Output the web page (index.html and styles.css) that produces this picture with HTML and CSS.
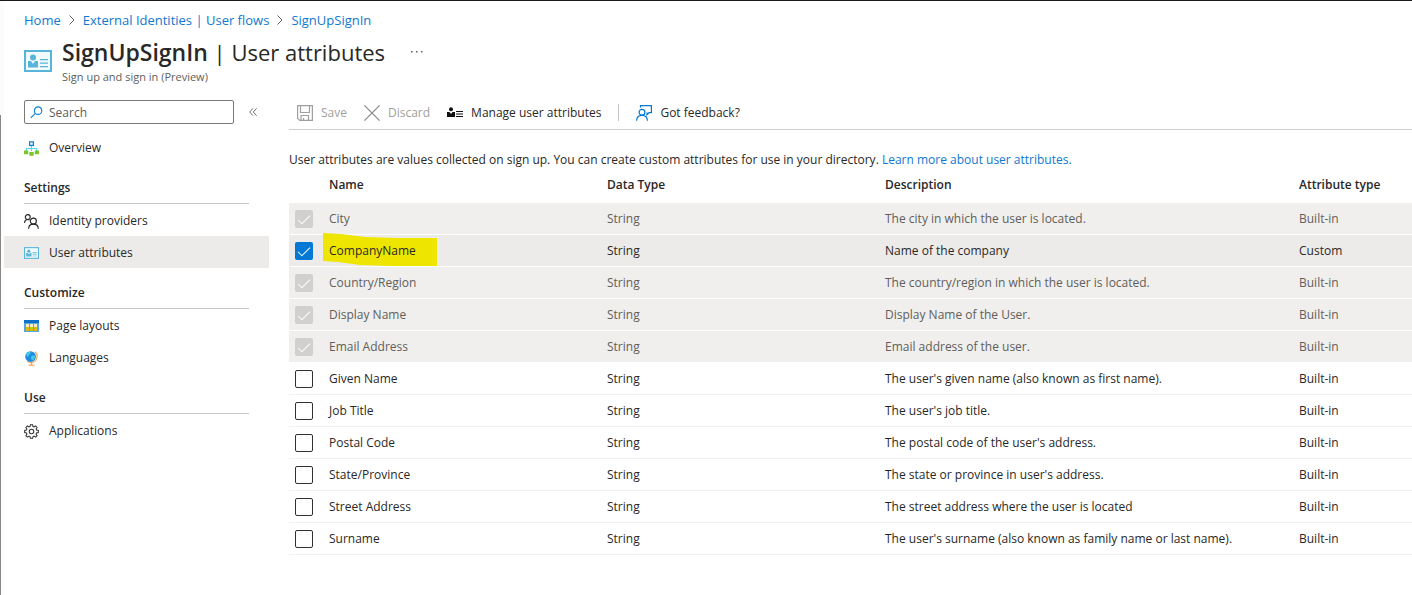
FILE: index.html
```html
<!DOCTYPE html>
<html lang="en">
<head>
    <meta charset="UTF-8">
    <meta name="viewport" content="width=device-width, initial-scale=1.0">
    <title>SignUpSignIn | User attributes</title>
    <link rel="stylesheet" href="styles.css">
</head>
<body>
    <!-- shared symbols -->
    <svg class="symbols" aria-hidden="true">
        <symbol id="id-card" viewBox="0 0 28 22">
            <path fill="#59b4d9" d="M0 0h28v22H0z"/>
            <path fill="#f1fafd" d="M2 2h24v18H2z"/>
            <circle cx="9" cy="7.500" r="3" fill="#59b4d9"/>
            <path fill="#59b4d9" d="M4 11h3l2 3 2-3h3v6.500H4zM16 9h8v1.300h-8zM16 12.500h8v1.300h-8zM16 16h8v1.300h-8z"/>
        </symbol>
    </svg>

    <div class="rail"></div>
    <div class="blade">
        <nav class="breadcrumb" aria-label="Breadcrumb">
            <a href="#">Home</a>
            <svg width="6" height="10" viewBox="0 0 6 10"><path d="M.5.5 5 5 .5 9.500" fill="none" stroke="#605e5c"/></svg>
            <a href="#">External Identities | User flows</a>
            <svg width="6" height="10" viewBox="0 0 6 10"><path d="M.5.5 5 5 .5 9.500" fill="none" stroke="#605e5c"/></svg>
            <a href="#">SignUpSignIn</a>
        </nav>

        <header class="title-bar">
            <svg class="title-icon" width="28" height="22"><use href="#id-card"/></svg>
            <div>
                <h1><strong>SignUpSignIn</strong> | User attributes</h1>
                <p class="subtitle">Sign up and sign in (Preview)</p>
            </div>
            <button class="more" aria-label="More">
                <svg width="12" height="2" viewBox="0 0 12 2"><path d="M0 0h1.500v1.500H0zM5 0h1.500v1.500H5zM10 0h1.500v1.500H10z" fill="#605e5c"/></svg>
            </button>
        </header>

        <div class="content">
            <aside class="menu">
                <div class="search-row">
                    <div class="search">
                        <svg width="13" height="13" viewBox="0 0 14 14" fill="none" stroke="#1080d8" stroke-width="1.200"><circle cx="8.700" cy="5" r="4"/><path d="M5.800 7.900.8 12.900"/></svg>
                        <input type="text" placeholder="Search" aria-label="Search">
                    </div>
                    <button class="collapse" aria-label="Collapse menu">
                        <svg width="8" height="8" viewBox="0 0 8 8"><path d="M4 .3.700 4 4 7.700M7.600.3 4.300 4l3.300 3.700" fill="none" stroke="#605e5c" stroke-width=".9"/></svg>
                    </button>
                </div>

                <a class="item" href="#">
                    <svg width="15" height="15" viewBox="0 0 16 16">
                        <path d="M8 5v6M2.500 11V8h11v3" fill="none" stroke="#50d9f0" stroke-width="1.200"/>
                        <path d="M6 .9h4v3.800H6z" fill="#fff" stroke="#0f80d7" stroke-width="1.400"/>
                        <path d="M0 10.200h4.500V14H0zM5.700 11.700h4.600v4H5.700zM11.500 10.200H16V14h-4.500z" fill="#7ac42c"/>
                    </svg>
                    Overview
                </a>

                <h2>Settings</h2>
                <a class="item" href="#">
                    <svg width="15" height="15" viewBox="0 0 16 16" fill="none" stroke="#252423" stroke-width="1.200">
                        <circle cx="4" cy="3.200" r="2.600"/><path d="M.6 9.500c0-2.200 1.300-3.700 3.400-3.700.8 0 1.500.2 2 .6"/>
                        <circle cx="10" cy="7.600" r="3.200"/><path d="M5 15.600c0-2.900 2-4.800 5-4.800s5.200 1.900 5.200 4.800"/>
                    </svg>
                    Identity providers
                </a>
                <a class="item selected" href="#">
                    <svg width="15" height="12"><use href="#id-card"/></svg>
                    User attributes
                </a>

                <h2>Customize</h2>
                <a class="item" href="#">
                    <svg width="15" height="12" viewBox="0 0 15 12">
                        <path fill="#5aa4e6" d="M0 0h15v12H0z"/><path fill="#0f70c8" d="M0 0h15v3H0z"/>
                        <path fill="#f6f2c0" d="M2 4h3v7H2zM6 4h3v7H6zM10 4h3v7h-3z"/>
                        <path fill="#d9bd12" d="M2 7h3v4H2zM6 7h3v4H6zM10 7h3v4h-3z"/>
                    </svg>
                    Page layouts
                </a>
                <a class="item" href="#">
                    <svg width="15" height="15" viewBox="0 0 16 16">
                        <path d="M11.500.8c2.300 1.600 3 4.300 2.200 6.800-1 3-3.800 4.800-7 4.500-1.400-.1-2.400-.6-3.300-1.300M8 12v3" fill="none" stroke="#f0a860" stroke-width="1.300"/>
                        <path fill="#f0a860" d="M4.800 14.500h6.400v1.300H4.800z"/>
                        <circle cx="7" cy="5.900" r="5.700" fill="#1f8be0"/>
                        <path fill="#42cce8" d="M2.300 3.500C3.500 1.500 5 .8 6.500.7l1 1.600-2 1.300-.4 1.900-2 .7zM8 5.200l2.700-.8 1.200 1.700-1.400 3-2 .8-1.200-2.500z"/>
                    </svg>
                    Languages
                </a>

                <h2>Use</h2>
                <a class="item" href="#">
                    <svg width="15" height="15" viewBox="0 0 16 16" fill="none" stroke="#323130" stroke-width="1.100">
                        <path d="M6.800.8h2.400l.4 1.900 1.100.5 1.700-1.100 1.600 1.600-1.100 1.700.5 1.100 1.900.4v2.300l-1.900.4-.5 1.100 1.100 1.700-1.600 1.600-1.700-1.100-1.100.5-.4 1.900H6.800l-.4-1.900-1.100-.5L3.600 14 2 12.400l1.100-1.700-.5-1.100-1.900-.4V6.900l1.900-.4.500-1.100L2 3.700l1.600-1.600 1.700 1.100 1.100-.5z"/>
                        <circle cx="8" cy="8" r="2.400"/>
                    </svg>
                    Applications
                </a>
            </aside>

            <main>
                <div class="toolbar">
                    <button disabled>
                        <svg width="16" height="16" viewBox="0 0 16 16" fill="none" stroke="#a19f9d" stroke-width="1.200"><path d="M.6.6h14.800v14.800H2.800L.6 13.200zM3.500.6v6.900h9V.6M4 15.400v-4.900h7.500v4.900M6.500 13v2.400"/></svg>
                        Save
                    </button>
                    <button disabled>
                        <svg width="16" height="16" viewBox="0 0 16 16" fill="none" stroke="#8a8886" stroke-width="1.200"><path d="m.4.400 15.200 15.200M15.600.4.400 15.600"/></svg>
                        Discard
                    </button>
                    <button>
                        <svg width="16" height="16" viewBox="0 0 16 16" fill="#111"><circle cx="4" cy="4.200" r="2"/><path d="M0 7h2.500L4 9l1.500-2H8v5H0zM9 6h7v1H9zM9 8.500h7v1H9zM9 11h7v1H9z"/></svg>
                        Manage user attributes
                    </button>
                    <span class="divider"></span>
                    <button>
                        <svg width="16" height="16" viewBox="0 0 16 16" fill="none" stroke="#0078d4" stroke-width="1.200"><path d="M4.500 2.500V.6h10.900v7H13l-2 2.200V7.600"/><circle cx="6" cy="7.200" r="2.900"/><path d="M.6 15.800c0-3.200 2.200-5.400 5.400-5.400s5.400 2.200 5.400 5.400"/></svg>
                        Got feedback?
                    </button>
                </div>

                <p class="intro">User attributes are values collected on sign up. You can create custom attributes for use in your directory. <a href="#">Learn more about user attributes.</a></p>

                <table>
                    <colgroup>
                        <col class="col-check"><col class="col-name"><col class="col-data"><col><col class="col-type">
                    </colgroup>
                    <thead>
                        <tr><td></td><th>Name</th><th>Data Type</th><th>Description</th><th>Attribute type</th></tr>
                    </thead>
                    <tbody>
                        <tr class="locked"><td><input type="checkbox" id="city" checked disabled></td><td><label for="city">City</label></td><td>String</td><td>The city in which the user is located.</td><td>Built-in</td></tr>
                        <tr class="checked">
                            <td><input type="checkbox" id="company" checked></td>
                            <td class="marked">
                                <svg class="marker" width="114" height="33" viewBox="0 0 114 33"><path fill="#eee600" d="M0 0l18 1 24 3 32 1h40v28H66l-29-1-22-3-15-1z"/></svg>
                                <label for="company">CompanyName</label>
                            </td>
                            <td>String</td><td>Name of the company</td><td>Custom</td>
                        </tr>
                        <tr class="locked"><td><input type="checkbox" id="country" checked disabled></td><td><label for="country">Country/Region</label></td><td>String</td><td>The country/region in which the user is located.</td><td>Built-in</td></tr>
                        <tr class="locked"><td><input type="checkbox" id="display" checked disabled></td><td><label for="display">Display Name</label></td><td>String</td><td>Display Name of the User.</td><td>Built-in</td></tr>
                        <tr class="locked"><td><input type="checkbox" id="email" checked disabled></td><td><label for="email">Email Address</label></td><td>String</td><td>Email address of the user.</td><td>Built-in</td></tr>
                        <tr><td><input type="checkbox" id="given"></td><td><label for="given">Given Name</label></td><td>String</td><td>The user's given name (also known as first name).</td><td>Built-in</td></tr>
                        <tr><td><input type="checkbox" id="job"></td><td><label for="job">Job Title</label></td><td>String</td><td>The user's job title.</td><td>Built-in</td></tr>
                        <tr><td><input type="checkbox" id="postal"></td><td><label for="postal">Postal Code</label></td><td>String</td><td>The postal code of the user's address.</td><td>Built-in</td></tr>
                        <tr><td><input type="checkbox" id="state"></td><td><label for="state">State/Province</label></td><td>String</td><td>The state or province in user's address.</td><td>Built-in</td></tr>
                        <tr><td><input type="checkbox" id="street"></td><td><label for="street">Street Address</label></td><td>String</td><td>The street address where the user is located</td><td>Built-in</td></tr>
                        <tr><td><input type="checkbox" id="surname"></td><td><label for="surname">Surname</label></td><td>String</td><td>The user's surname (also known as family name or last name).</td><td>Built-in</td></tr>
                    </tbody>
                </table>
            </main>
        </div>
    </div>
</body>
</html>
```
FILE: styles.css
```css
* {
    box-sizing: border-box;
}
body {
    margin: 0;
    min-height: 100vh;
    display: flex;
    border-top: 1px solid #1b1a19;
    background: #fff;
    color: #292827;
    font-family: "Segoe UI", "Open Sans", "Noto Sans", sans-serif;
    font-size: 12px;
    line-height: 18px;
}
a {
    color: #0f78d0;
    text-decoration: none;
}
button {
    padding: 0;
    border: none;
    background: none;
    color: inherit;
    font: inherit;
    cursor: pointer;
}
svg {
    flex-shrink: 0;
}
.symbols {
    position: absolute;
    width: 0;
    height: 0;
}

/* left edge of the collapsed portal menu */
.rail {
    width: 4px;
    flex-shrink: 0;
    background: linear-gradient(#8a8886, #8a8886) 0 114px / 1px 100% no-repeat, #fcfcfc;
}
.blade {
    flex: 1;
    min-width: 0;
}
.breadcrumb {
    display: flex;
    align-items: center;
    gap: 8px;
    padding: 10px 20px 0;
    font-size: 13px;
}
.title-bar {
    display: flex;
    padding: 7px 20px 0;
}
.title-icon {
    margin: 14px 10px 0 0;
}
h1 {
    margin: 0;
    font-size: 22px;
    line-height: 32px;
    font-weight: 400;
}
h1 strong {
    font-size: 23px;
    font-weight: 600;
}
.subtitle {
    margin: 0;
    color: #605e5c;
    font-size: 11px;
    line-height: 18px;
}
.more {
    display: flex;
    align-items: center;
    height: 32px;
    margin-left: 26px;
}
.content {
    display: flex;
    padding-top: 10px;
}

.menu {
    width: 265px;
    flex-shrink: 0;
    margin-right: 20px;
}
.search-row {
    display: flex;
    align-items: center;
    gap: 15px;
    padding: 4px 0 7px 20px;
}
.search {
    display: flex;
    align-items: center;
    gap: 6px;
    width: 210px;
    height: 24px;
    padding: 0 5px;
    border: 1px solid #7a7876;
    border-radius: 2px;
}
.search input {
    flex: 1;
    min-width: 0;
    padding: 2px 0 0;
    border: none;
    outline: none;
    font: inherit;
}
.search input::placeholder {
    color: #605e5c;
}
.collapse {
    display: flex;
}
.item {
    display: flex;
    align-items: center;
    gap: 10px;
    height: 32px;
    padding: 2px 0 0 20px;
    color: #292827;
}
.item.selected {
    background: #edebe9;
}
.menu h2 {
    margin: 8px 20px 0;
    padding-top: 2px;
    border-bottom: 1px solid #c8c6c4;
    font-size: 12px;
    font-weight: 600;
    line-height: 30px;
}

main {
    flex: 1;
    min-width: 0;
}
.toolbar {
    display: flex;
    align-items: center;
    gap: 17px;
    height: 34px;
    padding-left: 8px;
    border-bottom: 1px solid #d2d0ce;
}
.toolbar button {
    display: flex;
    align-items: center;
    gap: 8px;
    white-space: nowrap;
}
.toolbar button:disabled {
    color: #a19f9d;
}
.divider {
    width: 1px;
    height: 17px;
    background: #c8c6c4;
}
.intro {
    margin: 21px 0 0;
}

table {
    width: 100%;
    border-collapse: separate;
    border-spacing: 0;
    table-layout: fixed;
}
.col-check {
    width: 40px;
}
.col-name,
.col-data {
    width: 278px;
}
.col-type {
    width: 113px;
}
th,
td {
    height: 32px;
    padding: 0;
    border-bottom: 1px solid #f3f2f1;
    text-align: left;
    white-space: nowrap;
}
th {
    font-weight: 600;
}
thead th,
thead td {
    height: 34px;
    padding-bottom: 2px;
    border-bottom: none;
}
.locked td,
.checked td {
    border-bottom-color: #fff;
    background: #f0efed;
    background-clip: padding-box;
}
.checked td {
    background-color: #edebe9;
}
.locked td {
    color: #605e5c;
}
input[type="checkbox"] {
    appearance: none;
    display: block;
    width: 18px;
    height: 18px;
    margin: 1px 0 0 6px;
    border: 1px solid #323130;
    border-radius: 2px;
}
input[type="checkbox"]:checked {
    display: grid;
    place-items: center;
    border: none;
    background: #0078d4;
}
input[type="checkbox"]:checked:disabled {
    background: #d2d0ce;
}
input[type="checkbox"]:checked::before {
    content: "";
    width: 11px;
    height: 5px;
    margin-bottom: 3px;
    border-left: 1px solid #fff;
    border-bottom: 1px solid #fff;
    transform: rotate(-45deg);
}

/* highlighter stroke behind the custom attribute */
.marked {
    position: relative;
}
.marker {
    position: absolute;
    top: -2px;
    left: -6px;
}
.marked label {
    position: relative;
}
```
